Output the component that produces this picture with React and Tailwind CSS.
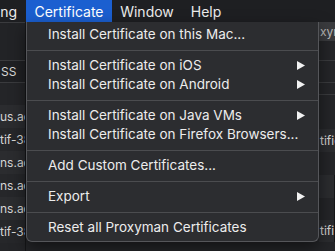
import React from "react";

const font = { fontFamily: '"Inter", "Liberation Sans", sans-serif' };

function Arrow() {
  return (
    <svg width="8" height="9" viewBox="0 0 8 9" className="shrink-0">
      <polygon points="0,0 8,4.5 0,9" fill="#f2f2f2" />
    </svg>
  );
}

function Item({ label, sub }) {
  return (
    <div className="flex h-[19px] items-center justify-between pl-[21px] pr-[13px] text-[13.5px] text-[#ececec]">
      <span className="whitespace-nowrap">{label}</span>
      {sub && <Arrow />}
    </div>
  );
}

function Sep() {
  return (
    <div className="flex h-[12px] items-center">
      <div className="h-px w-full bg-[#4b4c4f]" />
    </div>
  );
}

const rows = [
  { l: "us.ad" },
  { l: "tif-38" },
  { l: "ns.ad" },
  { l: "ns.ad" },
  { l: "ns.ad" },
  { l: "tif-38" },
];

export default function App() {
  return (
    <div className="relative h-[251px] w-[335px] overflow-hidden bg-[#242528]" style={font}>
      {/* menu bar */}
      <div className="flex h-[22px] items-center bg-[#1e1f22] text-[14px] text-[#ececec]">
        <div className="flex h-full w-[26px] items-center justify-end overflow-hidden pr-[9px]">
          <span className="whitespace-nowrap">Scripting</span>
        </div>
        <div className="flex h-full w-[86px] items-center justify-center bg-[#1b5fd0] text-white">Certificate</div>
        <div className="flex h-full w-[70px] items-center justify-center">Window</div>
        <div className="flex h-full w-[48px] items-center justify-center">Help</div>
      </div>

      {/* background app content */}
      <div className="flex h-[229px]">
        <div className="flex w-[26px] flex-col overflow-hidden border-r border-[#151618] text-[12px] text-[#d6d6d6]">
          <div className="h-[38px] shrink-0 border-t border-[#3a3b3e] bg-[#222326]" />
          <div className="flex h-[23px] shrink-0 items-center border-y border-[#3a3b3e] bg-[#1f2023] pl-[1px]">SS</div>
          <div className="h-[22px] shrink-0" />
          {rows.map((r, i) => (
            <div key={i} className={`flex h-[23px] shrink-0 items-center whitespace-nowrap ${i % 2 ? "bg-[#26272a]" : "bg-[#2b2c2f]"}`}>
              {r.l}
            </div>
          ))}
        </div>
        <div className="flex-1" />
        <div className="flex w-[16px] flex-col text-[12px] text-[#d6d6d6]">
          <div className="flex h-[19px] shrink-0 items-center overflow-hidden bg-[#3a3b3e] pl-[1px] text-[#b8b8b8]">xym</div>
          <div className="h-[20px] shrink-0 border-b border-[#3a3b3e]" />
          <div className="h-[22px] shrink-0 border-b border-[#3a3b3e]" />
          <div className="h-[12px] shrink-0 border-b border-[#3a3b3e]" />
          <div className="h-[34px] shrink-0" />
          <div className="flex h-[23px] shrink-0 items-center overflow-hidden bg-[#2b2c2f] pl-[1px]">tific</div>
          <div className="h-[23px] shrink-0" />
          <div className="h-[23px] shrink-0 border-r border-[#151618] bg-[#2b2c2f]" />
          <div className="h-[22px] shrink-0 border-r border-[#151618]" />
          <div className="flex h-[22px] shrink-0 items-center overflow-hidden border-r border-[#151618] bg-[#2b2c2f] pl-[1px]">tific</div>
        </div>
      </div>

      {/* dropdown menu */}
      <div className="absolute left-[26px] top-[22px] w-[293px] rounded-b-[6px] border-x border-b border-[#55565a] bg-[#2c2d30] pb-[4px] pt-[3px] shadow-[0_6px_16px_rgba(0,0,0,0.5)]">
        <Item label="Install Certificate on this Mac..." />
        <Sep />
        <Item label="Install Certificate on iOS" sub />
        <Item label="Install Certificate on Android" sub />
        <Sep />
        <Item label="Install Certificate on Java VMs" sub />
        <Item label="Install Certificate on Firefox Browsers..." />
        <Sep />
        <Item label="Add Custom Certificates..." />
        <Sep />
        <Item label="Export" sub />
        <Sep />
        <Item label="Reset all Proxyman Certificates" />
      </div>
    </div>
  );
}
